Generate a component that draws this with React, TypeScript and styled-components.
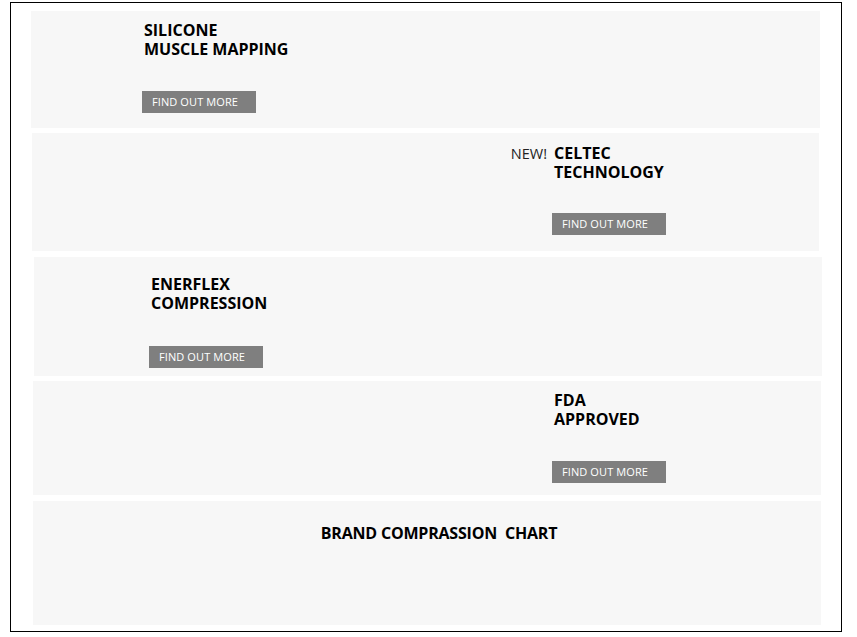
import styled, { createGlobalStyle } from "styled-components";

const GlobalStyle = createGlobalStyle`
    body {
        margin: 0;
        background: #ffffff;
        font-family: "Open Sans", "Liberation Sans", sans-serif;
    }
`

const Frame = styled.div`
    box-sizing: border-box;
    margin: 2px 0 0 10px;
    width: 832px;
    height: 630px;
    border: 1px solid #000000;
    padding-top: 8px;
    display: flex;
    flex-direction: column;
`

const Panel = styled.section<{ $left: number, $width: number, $height: number, $gap: number }>`
    box-sizing: border-box;
    margin-left: ${props => props.$left}px;
    margin-bottom: ${props => props.$gap}px;
    width: ${props => props.$width}px;
    height: ${props => props.$height}px;
    background: #f7f7f7;
`

const Feature = styled(Panel)<{ $indent: number, $top: number }>`
    padding: ${props => props.$top}px 0 0 ${props => props.$indent}px;
    display: flex;
    flex-direction: column;
    align-items: flex-start;
`

const TitleRow = styled.div`
    position: relative;
    padding-left: 2px;
`

const Title = styled.h2`
    margin: 0;
    font-size: 16px;
    line-height: 19px;
    font-weight: 700;
    color: #000000;
    white-space: pre-line;
`

// "NEW!" sits just left of the title, outside the column
const Badge = styled.span`
    position: absolute;
    right: 100%;
    top: 0;
    margin-right: 5px;
    font-size: 14.5px;
    line-height: 19px;
    font-weight: 400;
    color: #222222;
`

const MoreButton = styled.button<{ $space: number }>`
    margin-top: ${props => props.$space}px;
    box-sizing: border-box;
    width: 114px;
    height: 22px;
    padding: 0 0 1px 10px;
    border: none;
    background: #7f7f7f;
    color: #ffffff;
    font-family: "Open Sans", "Liberation Sans", sans-serif;
    font-size: 11px;
    letter-spacing: 0.1px;
    text-align: left;
    cursor: pointer;
`

const ChartPanel = styled(Panel)`
    padding: 23px 0 0 24px;
    text-align: center;
`

const ChartTitle = styled.h2`
    margin: 0;
    font-size: 16px;
    line-height: 19px;
    font-weight: 700;
    letter-spacing: -0.2px;
    white-space: pre;
`

const features = [
    { title: "SILICONE\nMUSCLE MAPPING", left: 20, width: 789, height: 117, gap: 5, indent: 111, top: 10, space: 32 },
    { title: "CELTEC\nTECHNOLOGY", badge: "NEW!", left: 21, width: 787, height: 118, gap: 6, indent: 520, top: 11, space: 31 },
    { title: "ENERFLEX\nCOMPRESSION", left: 23, width: 788, height: 119, gap: 5, indent: 115, top: 18, space: 33 },
    { title: "FDA\nAPPROVED", left: 22, width: 788, height: 114, gap: 6, indent: 519, top: 10, space: 32 },
]

export default function App() {
    return (
        <>
            <GlobalStyle />
            <Frame>
                {features.map(f => (
                    <Feature key={f.title} $left={f.left} $width={f.width} $height={f.height} $gap={f.gap} $indent={f.indent} $top={f.top}>
                        <TitleRow>
                            {f.badge && <Badge>{f.badge}</Badge>}
                            <Title>{f.title}</Title>
                        </TitleRow>
                        <MoreButton $space={f.space}>FIND OUT MORE</MoreButton>
                    </Feature>
                ))}
                <ChartPanel $left={22} $width={788} $height={124} $gap={0}>
                    <ChartTitle>{"BRAND COMPRASSION  CHART"}</ChartTitle>
                </ChartPanel>
            </Frame>
        </>
    )
}
